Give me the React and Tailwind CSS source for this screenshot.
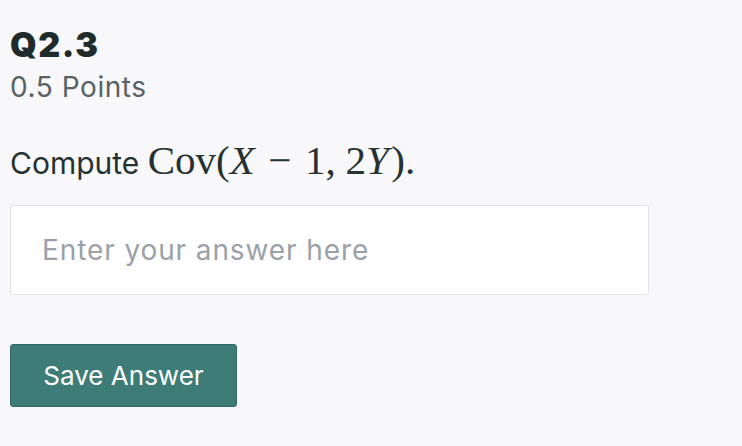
export default function App() {
  return (
    <div className="min-h-[446px] w-[742px] bg-[#f8f8fa] px-[10px] pt-[25px] text-[#263132]" style={{ fontFamily: "Inter, 'Open Sans', sans-serif" }}>
      <h2 className="text-[34px] font-black leading-[40px] tracking-[0.045em] text-[#1f2b2b]">Q2.3</h2>
      <div className="mt-[5px] text-[28px] leading-[34px] tracking-[0.02em] text-[#586264]">0.5 Points</div>
      <p className="mt-[32px] text-[30px] leading-[48px] text-[#263132]">
        <span>Compute </span>
        <span className="text-[41px]" style={{ fontFamily: "'Liberation Serif', 'Times New Roman', serif" }}>
          Cov(<i>X</i>
          <span className="mx-[0.33em]">−</span>1,<span className="ml-[0.24em]">2</span><i>Y</i>
          <span className="ml-[0.06em]">).</span>
        </span>
      </p>
      <div className="mt-[18px] flex h-[90px] w-[639px] items-center rounded-[3px] border border-[#dfe2e6] bg-white pl-[31px]">
        <input
          className="w-full bg-transparent text-[28px] tracking-[0.032em] text-[#263132] outline-none placeholder:text-[#9aa1a8]"
          placeholder="Enter your answer here"
          style={{ fontFamily: "Inter, sans-serif" }}
        />
      </div>
      <button className="mt-[49px] flex h-[63px] w-[227px] items-center justify-center rounded-[3px] border border-[#2d6862] bg-[#3e7d77] text-[26px] text-white" style={{ fontFamily: "Inter, sans-serif" }}>
        Save Answer
      </button>
    </div>
  );
}
